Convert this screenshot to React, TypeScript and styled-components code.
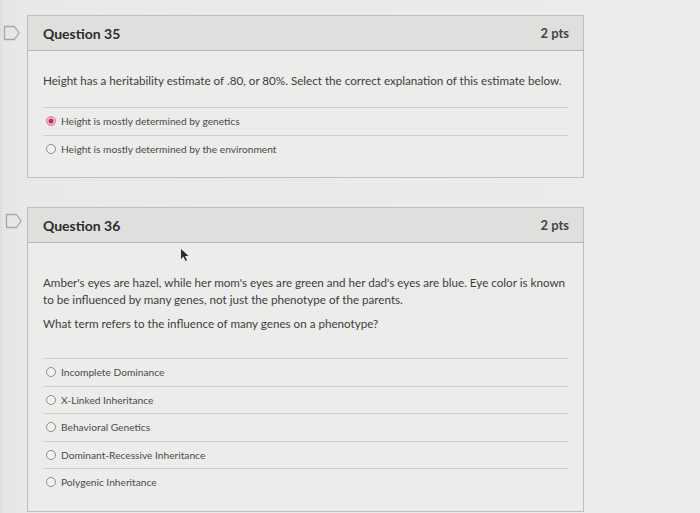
import React from 'react';
import styled, { createGlobalStyle } from 'styled-components';

const GlobalStyle = createGlobalStyle`
  html, body {
    margin: 0;
    padding: 0;
    background: #e9e9e7;
  }
  body {
    font-family: Lato, 'Open Sans', sans-serif;
    color: #2d3b45;
  }
`;

const Page = styled.div`
  width: 700px;
  height: 513px;
  overflow: hidden;
  padding-top: 15px;
  box-sizing: border-box;
  display: flex;
  flex-direction: column;
  gap: 29px;
  background: linear-gradient(90deg, #dcdcda 0, #e6e6e4 3px, #e9e9e7 30px, #ececea 100%);
`;

const QuestionRow = styled.div`
  display: flex;
  align-items: flex-start;
`;

const FlagCol = styled.div<{ $offset: number; $left: number }>`
  width: 27px;
  flex-shrink: 0;
  padding-top: ${p => p.$offset}px;
  padding-left: ${p => p.$left}px;
  box-sizing: border-box;
  display: flex;
`;

const Card = styled.div`
  position: relative;
  width: 557px;
  border: 1px solid #bdbdbb;
  background: #ececea;
  box-sizing: border-box;
`;

const Header = styled.div`
  height: 34px;
  display: flex;
  align-items: center;
  justify-content: space-between;
  padding: 0 14px 0 15px;
  background: #dfdfdd;
  border-bottom: 1px solid #b5b5b3;
`;

const Title = styled.h3`
  margin: 0;
  font-size: 14px;
  font-weight: 700;
  color: #2b2b2b;
`;

const Points = styled.span`
  font-size: 13px;
  font-weight: 700;
  color: #444;
`;

const Body = styled.div<{ $top: number; $bottom: number }>`
  padding: ${p => p.$top}px 15px ${p => p.$bottom}px 15px;
`;

const Text = styled.p`
  margin: 0 0 7px;
  font-size: 11.65px;
  line-height: 17px;
  color: #3d3d3d;
`;

const Answers = styled.div<{ $top: number }>`
  margin-top: ${p => p.$top}px;
  border-top: 1px solid #cfcfcd;
`;

const AnswerRow = styled.label`
  display: flex;
  align-items: center;
  gap: 5px;
  height: 26.5px;
  padding-left: 3px;
  border-bottom: 1px solid #cfcfcd;
  font-size: 10.2px;
  line-height: 12px;
  color: #4a4a4a;
  &:last-child {
    border-bottom: none;
  }
`;

const Radio = styled.span<{ $checked?: boolean }>`
  width: 10px;
  height: 10px;
  border-radius: 50%;
  box-sizing: border-box;
  border: 1px solid ${p => (p.$checked ? '#d88aa6' : '#8d8d8d')};
  background: ${p => (p.$checked ? '#c92a64' : '#f2f2f0')};
  box-shadow: ${p => (p.$checked ? 'inset 0 0 0 1.5px #f3c9d8' : 'none')};
  flex-shrink: 0;
`;

const Cursor = styled.svg`
  position: absolute;
  left: 152px;
  top: 40px;
`;

const Flag = () => (
  <svg width="18" height="16" viewBox="0 0 18 16">
    <path
      d="M1.5 1.5 H11.5 L16 8 L11.5 14.5 H1.5 Z"
      fill="none"
      stroke="#a6a6a6"
      strokeWidth="1.3"
      strokeLinejoin="round"
    />
  </svg>
);

type Answer = { text: string; checked?: boolean };

const q35: Answer[] = [
  { text: 'Height is mostly determined by genetics', checked: true },
  { text: 'Height is mostly determined by the environment' },
];

const q36: Answer[] = [
  { text: 'Incomplete Dominance' },
  { text: 'X-Linked Inheritance' },
  { text: 'Behavioral Genetics' },
  { text: 'Dominant-Recessive Inheritance' },
  { text: 'Polygenic Inheritance' },
];

const AnswerList = ({ items, top }: { items: Answer[]; top: number }) => (
  <Answers $top={top}>
    {items.map(a => (
      <AnswerRow key={a.text}>
        <Radio $checked={a.checked} />
        {a.text}
      </AnswerRow>
    ))}
  </Answers>
);

const App = () => (
  <>
    <GlobalStyle />
    <Page>
      <QuestionRow>
        <FlagCol $offset={10} $left={3}>
          <Flag />
        </FlagCol>
        <Card>
          <Header>
            <Title>Question 35</Title>
            <Points>2 pts</Points>
          </Header>
          <Body $top={21} $bottom={15}>
            <Text>
              Height has a heritability estimate of .80, or 80%. Select the correct
              explanation of this estimate below.
            </Text>
            <AnswerList items={q35} top={18} />
          </Body>
        </Card>
      </QuestionRow>
      <QuestionRow>
        <FlagCol $offset={6} $left={5}>
          <Flag />
        </FlagCol>
        <Card>
          <Header>
            <Title>Question 36</Title>
            <Points>2 pts</Points>
          </Header>
          <Cursor width="10" height="14" viewBox="0 0 10 14">
            <path d="M1 1 L1 11 L3.5 8.5 L5.5 13 L7 12.3 L5 8 L8.5 8 Z" fill="#2a2a2a" />
          </Cursor>
          <Body $top={31} $bottom={15}>
            <Text>
              Amber's eyes are hazel, while her mom's eyes are green and her dad's eyes
              are blue. Eye color is known to be influenced by many genes, not just the
              phenotype of the parents.
            </Text>
            <Text>What term refers to the influence of many genes on a phenotype?</Text>
            <AnswerList items={q36} top={26} />
          </Body>
        </Card>
      </QuestionRow>
    </Page>
  </>
);

export default App;
